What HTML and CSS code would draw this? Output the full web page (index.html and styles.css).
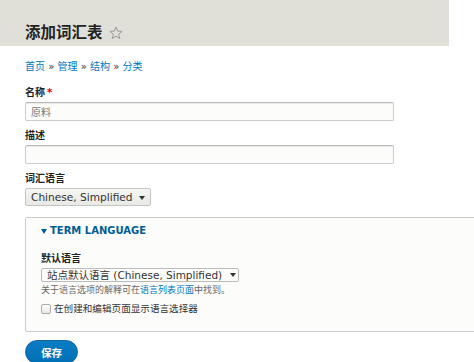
FILE: index.html
```html
<!DOCTYPE html>
<html lang="zh-CN">
<head>
    <meta charset="UTF-8">
    <title>添加词汇表</title>
    <link rel="stylesheet" href="styles.css">
</head>
<body>
    <header class="page-header">
        <h1 class="page-title">添加词汇表
            <svg class="shortcut-star" width="14" height="14" viewBox="0 0 14 14">
                <polygon points="7,1 8.7,5.1 13,5.4 9.7,8.2 10.7,12.5 7,10.2 3.3,12.5 4.3,8.2 1,5.4 5.3,5.1" fill="none" stroke="#9a9a9a" stroke-width="1" stroke-linejoin="round"/>
            </svg>
        </h1>
    </header>

    <main class="content">
        <nav class="breadcrumb">
            <a href="#">首页</a> » <a href="#">管理</a> » <a href="#">结构</a> » <a href="#">分类</a>
        </nav>

        <form class="vocab-form">
            <div class="form-item">
                <label class="form-label" for="name">名称<span class="required">*</span></label>
                <input class="form-text" type="text" id="name" value="原料">
            </div>
            <div class="form-item">
                <label class="form-label" for="desc">描述</label>
                <input class="form-text" type="text" id="desc">
            </div>
            <div class="form-item">
                <label class="form-label" for="langcode">词汇语言</label>
                <div class="select-wrap">
                    <select class="form-select" id="langcode">
                        <option>Chinese, Simplified</option>
                    </select>
                </div>
            </div>

            <fieldset class="details">
                <div class="details-summary">TERM LANGUAGE</div>
                <div class="details-body">
                    <label class="form-label" for="default-lang">默认语言</label>
                    <div class="select-wrap small">
                        <select class="form-select small" id="default-lang">
                            <option>站点默认语言 (Chinese, Simplified)</option>
                        </select>
                    </div>
                    <div class="description">关于语言选项的解释可在<a href="#">语言列表页面</a>中找到。</div>
                    <label class="checkbox-row">
                        <input type="checkbox" class="form-checkbox">
                        <span>在创建和编辑页面显示语言选择器</span>
                    </label>
                </div>
            </fieldset>

            <button type="button" class="button-primary">保存</button>
        </form>
    </main>
</body>
</html>
```

FILE: styles.css
```css
body, html {
    margin: 0;
    padding: 0;
    overflow: hidden;
    background-color: #fff;
    font-family: "DejaVu Sans", "Noto Sans CJK SC", sans-serif;
    font-size: 10px;
    color: #333;
}

a {
    color: #0074bd;
    text-decoration: none;
}

.page-header {
    background-color: #e0e0d8;
    margin-right: 25px;
    padding: 22px 0 2px 25px;
}

.page-title {
    margin: 0;
    font-size: 15.5px;
    line-height: 22px;
    font-weight: bold;
    color: #232323;
    display: flex;
    align-items: center;
    gap: 6px;
}

.shortcut-star {
    margin-top: -1px;
}

.content {
    padding-left: 25px;
}

.breadcrumb {
    margin-top: 14px;
    line-height: 14px;
    font-size: 10px;
    color: #333;
}

.form-item {
    margin-top: 12px;
}

.form-item + .form-item {
    margin-top: 8px;
}

.form-label {
    display: block;
    font-weight: bold;
    line-height: 14px;
    margin-bottom: 2px;
    color: #222;
}

.required {
    color: #e00;
    margin-left: 2px;
}

.form-text {
    display: block;
    box-sizing: border-box;
    width: 369px;
    height: 19px;
    margin: 0;
    padding: 0 5px;
    border: 1px solid #ccc;
    border-top-color: #b8b8b8;
    border-radius: 2px;
    background-color: #fcfcfa;
    box-shadow: inset 0 1px 1px rgba(0, 0, 0, 0.08);
    font-family: inherit;
    font-size: 10px;
    color: #777;
}

.select-wrap {
    position: relative;
    display: inline-block;
    vertical-align: top;
}

.select-wrap::after {
    content: "";
    position: absolute;
    right: 6px;
    top: 8px;
    border-left: 3px solid transparent;
    border-right: 3px solid transparent;
    border-top: 4px solid #333;
    pointer-events: none;
}

.form-select {
    -webkit-appearance: none;
    appearance: none;
    display: block;
    box-sizing: border-box;
    width: 126px;
    height: 18px;
    margin: 0;
    padding: 0 0 0 5px;
    border: 1px solid #c4c4c0;
    border-radius: 2px;
    background: linear-gradient(#f6f6f3, #e8e8e4);
    font-family: inherit;
    font-size: 10.6px;
    color: #333;
}

.form-select.small {
    width: 198px;
    height: 14px;
    padding-left: 5px;
    font-size: 10.5px;
    line-height: 12px;
    background: #fdfdfc;
    border-color: #bbb;
}

.select-wrap.small::after {
    right: 3px;
    top: 5px;
}

.details {
    box-sizing: border-box;
    margin: 11px -10px 0 0;
    padding: 6px 0 15px 15px;
    border: 1px solid #ccc;
    border-radius: 2px 0 0 2px;
    background-color: #fcfcfa;
    min-width: 0;
}

.details-summary {
    position: relative;
    padding-left: 9px;
    line-height: 14px;
    font-size: 10px;
    font-weight: bold;
    color: #005c96;
}

.details-summary::before {
    content: "";
    position: absolute;
    left: 0;
    top: 5px;
    border-left: 3px solid transparent;
    border-right: 3px solid transparent;
    border-top: 5px solid #005c96;
}

.details-body {
    margin-top: 14px;
}

.description {
    margin-top: 2px;
    line-height: 12px;
    font-size: 9px;
    color: #666;
}

.checkbox-row {
    display: flex;
    align-items: center;
    gap: 3px;
    margin-top: 6px;
    line-height: 14px;
    font-size: 9.6px;
    color: #333;
}

.form-checkbox {
    -webkit-appearance: none;
    appearance: none;
    box-sizing: border-box;
    width: 10px;
    height: 10px;
    margin: 0;
    border: 1px solid #aaa;
    border-radius: 2px;
    background: linear-gradient(#fff, #e8e8e8);
}

.button-primary {
    display: block;
    margin-top: 8px;
    width: 53px;
    height: 24px;
    padding: 0;
    border: 1px solid #1a62a0;
    border-radius: 12px;
    background: linear-gradient(#0a7cc4, #0070b6);
    color: #fff;
    font-family: inherit;
    font-size: 10.5px;
    font-weight: bold;
    cursor: pointer;
}
```
